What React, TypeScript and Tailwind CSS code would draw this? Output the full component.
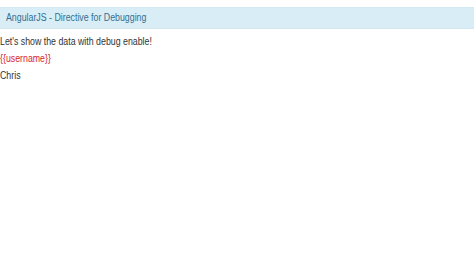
export default function App() {
  return (
    <div className="w-[474px] h-[266px] bg-white font-['Liberation_Sans',Arial,sans-serif] text-[#333333]">
      <div className="h-[7px]" />
      <div className="h-[22px] bg-[#d9edf7] border-y border-[#d3e9f3] text-[#31708f] text-[10px] leading-[20px] pl-[6px]">
        <span className="inline-block origin-left scale-x-[0.88]">AngularJS - Directive for Debugging</span>
      </div>
      <div className="text-[10px] leading-[17px] pt-[4px]">
        <p><span className="inline-block origin-left scale-x-[0.88]">Let's show the data with debug enable!</span></p>
        <p className="text-[#d9242a]"><span className="inline-block origin-left scale-x-[0.88]">{'{{username}}'}</span></p>
        <p><span className="inline-block origin-left scale-x-[0.88]">Chris</span></p>
      </div>
    </div>
  );
}
